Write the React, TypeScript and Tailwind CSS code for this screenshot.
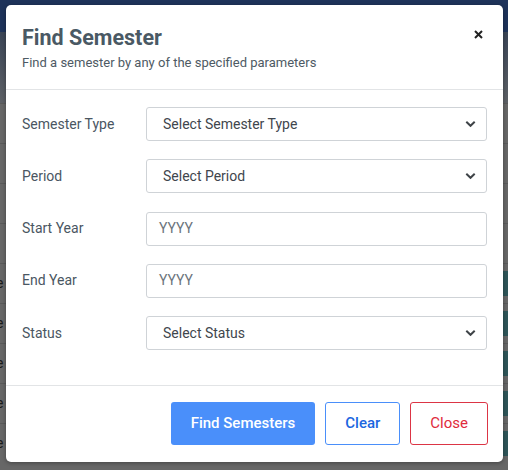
import React from "react";

const Chevron = () => (
  <svg className="pointer-events-none absolute right-[10px] top-1/2 -translate-y-1/2" width="11" height="7" viewBox="0 0 11 7">
    <path d="M1.3 1.3 L5.5 5.3 L9.7 1.3" fill="none" stroke="#3f4448" strokeWidth="2" />
  </svg>
);

const fields = [
  { label: "Semester Type", kind: "select", value: "Select Semester Type" },
  { label: "Period", kind: "select", value: "Select Period" },
  { label: "Start Year", kind: "input", value: "YYYY" },
  { label: "End Year", kind: "input", value: "YYYY" },
  { label: "Status", kind: "select", value: "Select Status" },
];

const App = () => {
  return (
    <div className="relative h-[470px] w-[508px] overflow-hidden bg-[#676767]" style={{ fontFamily: "Roboto, 'Liberation Sans', sans-serif" }}>
      {/* page behind the dimmed overlay */}
      <div className="h-[32px] bg-[#1e335a]" />
      <div className="h-[71px] bg-gradient-to-b from-[#3a4556] to-[#5e6166]" />
      <div className="flex flex-col">
        {[0, 1, 2, 3, 4, 5, 6, 7, 8].map((i) => (
          <div key={i} className="flex h-[40px] items-center justify-between border-t border-[#5a5a5a]">
            <span className="-ml-[4px] text-[14px] text-[#1a1a1a]">{i > 3 ? "e" : ""}</span>
            <span className={i > 3 ? "h-[25px] w-[12px] bg-[#2e5558]" : ""} />
          </div>
        ))}
      </div>

      {/* modal */}
      <div className="absolute left-[6px] top-[5px] flex h-[457px] w-[497px] flex-col rounded-[5px] bg-white shadow-[0_1px_4px_rgba(0,0,0,0.35)]">
        <div className="relative border-b border-[#e2e4e6] px-[16px] pb-[17px] pt-[19px]">
          <h2 className="text-[21.5px] font-bold leading-[28px] text-[#4a5964]">Find Semester</h2>
          <p className="mt-[2px] text-[13px] leading-[18px] text-[#4e5a64]">Find a semester by any of the specified parameters</p>
          <button className="absolute right-[19px] top-[24px] p-[1px]">
            <svg width="9" height="9" viewBox="0 0 9 9">
              <path d="M1 1 L8 8 M8 1 L1 8" stroke="#222" strokeWidth="2" />
            </svg>
          </button>
        </div>

        <div className="flex flex-col gap-[18.25px] px-[16px] pb-[34px] pt-[17px]">
          {fields.map((f) => (
            <div key={f.label} className="flex items-center">
              <label className="w-[124px] text-[14px] text-[#4a5662]">{f.label}</label>
              <div className="relative h-[34px] flex-1 rounded-[3px] border border-[#cfd3d7] bg-white">
                <div className={`flex h-full items-center text-[14px] ${f.kind === "select" ? "pl-[16px] text-[#3f464d]" : "pl-[12px] text-[#6c757d]"}`}>
                  {f.value}
                </div>
                {f.kind === "select" && <Chevron />}
              </div>
            </div>
          ))}
        </div>

        <div className="mt-auto flex justify-end gap-[10px] border-t border-[#e2e4e6] px-[15px] pb-[17px] pt-[16px]">
          <button className="h-[43px] rounded-[3px] bg-[#4a8ffa] px-[20px] text-[15px] font-medium text-white">Find Semesters</button>
          <button className="h-[43px] rounded-[3px] border border-[#4a8ffa] bg-white px-[19px] text-[15px] font-medium text-[#1b66e0]">Clear</button>
          <button className="h-[43px] rounded-[3px] border border-[#dc3545] bg-white px-[19px] text-[15px] text-[#e02a3c]">Close</button>
        </div>
      </div>
    </div>
  );
};

export default App;
